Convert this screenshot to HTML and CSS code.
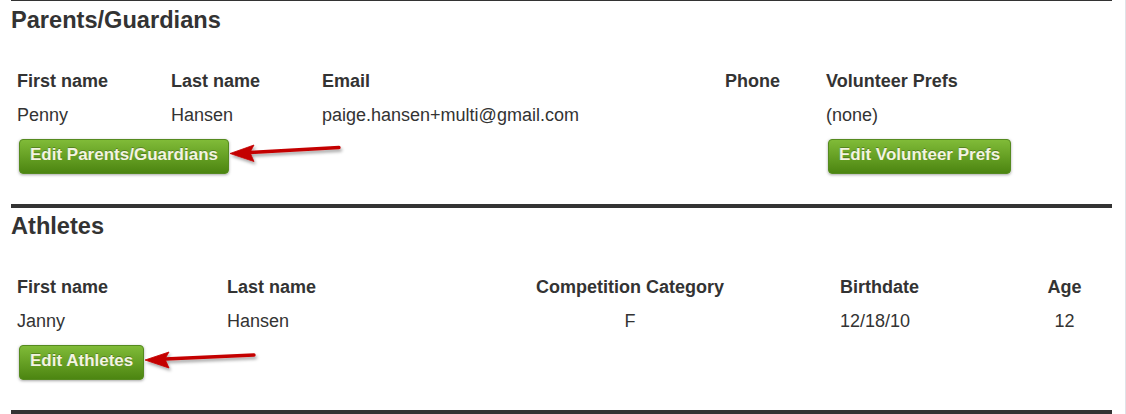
FILE: index.html
```html
<!DOCTYPE html>
<html>
<head>
<meta charset="utf-8">
<link rel="stylesheet" href="styles.css">
</head>
<body>
<div class="page">
  <section class="block block-first">
    <h2 class="title">Parents/Guardians</h2>
    <table class="grid">
      <colgroup>
        <col class="p1"><col class="p2"><col class="p3"><col class="p4"><col class="p5">
      </colgroup>
      <thead>
        <tr><th>First name</th><th>Last name</th><th>Email</th><th>Phone</th><th>Volunteer Prefs</th></tr>
      </thead>
      <tbody>
        <tr><td>Penny</td><td>Hansen</td><td>paige.hansen+multi@gmail.com</td><td></td><td>(none)</td></tr>
        <tr class="actions">
          <td colspan="3"><span class="btn">Edit Parents/Guardians</span></td>
          <td></td>
          <td><span class="btn">Edit Volunteer Prefs</span></td>
        </tr>
      </tbody>
    </table>
  </section>
  <section class="block">
    <h2 class="title">Athletes</h2>
    <table class="grid">
      <colgroup>
        <col class="a1"><col class="a2"><col class="a3"><col class="a4"><col class="a5">
      </colgroup>
      <thead>
        <tr><th>First name</th><th>Last name</th><th class="c">Competition Category</th><th>Birthdate</th><th class="c">Age</th></tr>
      </thead>
      <tbody>
        <tr><td>Janny</td><td>Hansen</td><td class="c">F</td><td>12/18/10</td><td class="c">12</td></tr>
        <tr class="actions">
          <td colspan="5"><span class="btn">Edit Athletes</span></td>
        </tr>
      </tbody>
    </table>
  </section>
  <div class="block block-end"></div>

  <svg class="arrows" width="1126" height="414" viewBox="0 0 1126 414" xmlns="http://www.w3.org/2000/svg">
    <defs>
      <filter id="sh" x="-20%" y="-50%" width="140%" height="200%">
        <feDropShadow dx="1.5" dy="2.5" stdDeviation="1.6" flood-color="#000" flood-opacity="0.35"/>
      </filter>
    </defs>
    <g filter="url(#sh)" fill="#c40000" stroke="#c40000">
      <line x1="250" y1="152.5" x2="339" y2="147.5" stroke-width="3.4" stroke-linecap="round"/>
      <polygon points="230,153.5 254,145 250,152.5 254,161.5" stroke-width="0.8" stroke-linejoin="round"/>
      <line x1="165" y1="359" x2="254" y2="355" stroke-width="3.4" stroke-linecap="round"/>
      <polygon points="145,360 169,352 165,359 169,368" stroke-width="0.8" stroke-linejoin="round"/>
    </g>
  </svg>
</div>
</body>
</html>
```

FILE: styles.css
```css
html, body {
  margin: 0;
  padding: 0;
  background: #ffffff;
}

.page {
  position: relative;
  width: 1125px;
  height: 414px;
  border-right: 1px solid #dfe2e7;
  overflow: hidden;
  font-family: "Liberation Sans", Arial, sans-serif;
  color: #333333;
}

.block {
  margin: 0 13px 0 11px;
  padding-bottom: 30px;
  border-top: 4px solid #333333;
}

.block-first {
  border-top-width: 1px;
}

.block-end {
  padding-bottom: 0;
  height: 0;
}

.title {
  margin: 5px 0 31px 0;
  font-size: 23.6px;
  line-height: 26px;
  font-weight: bold;
  color: #333333;
}

.block-first .title {
  margin-top: 6px;
}

.grid {
  width: 100%;
  table-layout: fixed;
  border-collapse: collapse;
  border-spacing: 0;
  font-size: 18px;
}

.grid th,
.grid td {
  padding: 0 6px;
  height: 34px;
  line-height: 34px;
  text-align: left;
  vertical-align: middle;
  white-space: nowrap;
}

.grid th {
  font-weight: bold;
}

.grid .c {
  text-align: center;
}

.p1 { width: 154px; }
.p2 { width: 151px; }
.p3 { width: 403px; }
.p4 { width: 101px; }
.p5 { width: auto; }

.a1 { width: 210px; }
.a2 { width: 205px; }
.a3 { width: 408px; }
.a4 { width: 183px; }
.a5 { width: auto; }

.grid tr.actions td {
  height: auto;
  line-height: normal;
  padding-top: 7px;
  vertical-align: top;
}

.btn {
  display: inline-block;
  margin-left: 2px;
  padding: 4px 10px 8px 10px;
  line-height: 21px;
  font-size: 17px;
  font-weight: bold;
  color: #f3f3e2;
  text-shadow: 0 -1px 0 rgba(0, 0, 0, 0.25);
  background: linear-gradient(to bottom, #80bb38 0%, #66a024 50%, #4c8511 100%);
  border: 1px solid #558a1f;
  border-radius: 4px;
  box-shadow: 0 1px 3px rgba(0, 0, 0, 0.35);
}

.arrows {
  position: absolute;
  left: 0;
  top: 0;
  pointer-events: none;
}
```
